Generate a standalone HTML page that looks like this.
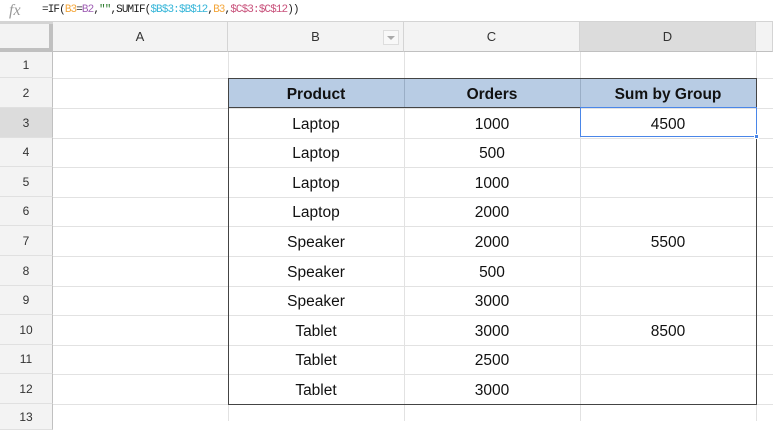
<!DOCTYPE html>
<html><head><meta charset="utf-8"><style>
*{margin:0;padding:0;box-sizing:border-box}
body{width:773px;height:421px;overflow:hidden;background:#fff;position:relative;font-family:"Liberation Sans",sans-serif}
.a{position:absolute}
.fx{left:0;top:0;width:773px;height:22px;background:#fff;border-bottom:1px solid #d4d4d4}
.rh{left:0;width:53px;background:#f3f3f3;border-right:1px solid #c0c0c0;border-bottom:1px solid #e0e0e0;color:#333;font-size:12px;display:flex;align-items:center;justify-content:center}
.ch{top:22px;height:30px;background:#f3f3f3;border-right:1px solid #d4d4d4;border-bottom:1px solid #c0c0c0;color:#333;font-size:13px;display:flex;align-items:center;justify-content:center}
.c{display:flex;align-items:center;justify-content:center;font-size:15.5px;color:#111;padding-top:3px}
.hline{height:1px;background:#e2e2e2;left:53px;width:720px}
.vline{width:1px;background:#e2e2e2;top:52px;height:369px}
</style></head><body>
<div class="a fx"></div>
<div class="a" style="left:9px;top:2px;font-family:'Liberation Serif',serif;font-style:italic;font-size:16px;color:#999">fx</div>
<div class="a" style="left:42px;top:4px;font-family:'Liberation Mono',monospace;font-size:11px;color:#222;letter-spacing:-0.9px;white-space:nowrap">=IF(<span style="color:#f4a63a">B3</span>=<span style="color:#a05fb5">B2</span>,<span style="color:#2a7a2a">""</span>,SUMIF(<span style="color:#35b5d8">$B$3:$B$12</span>,<span style="color:#f4a63a">B3</span>,<span style="color:#c8507a">$C$3:$C$12</span>))</div>
<div class="a" style="left:0;top:22px;width:773px;height:2px;background:#d4d4d4"></div>
<div class="a" style="left:0;top:24px;width:53px;height:28px;background:#f3f3f3;border-right:4px solid #c0c0c0;border-bottom:4px solid #c0c0c0"></div>
<div class="a ch" style="left:53px;width:175px">A</div>
<div class="a ch" style="left:228px;width:176px">B</div>
<div class="a" style="left:383px;top:30px;width:16px;height:15px;border:1px solid #ddd;background:#f8f8f8"></div>
<div class="a" style="left:387px;top:36px;width:0;height:0;border-left:4px solid transparent;border-right:4px solid transparent;border-top:4px solid #aaa"></div>
<div class="a ch" style="left:404px;width:176px">C</div>
<div class="a ch" style="left:580px;width:176px;background:#dcdcdc">D</div>
<div class="a ch" style="left:756px;width:17px"></div>

<div class="a vline" style="left:228px"></div>
<div class="a vline" style="left:404px"></div>
<div class="a vline" style="left:580px"></div>
<div class="a vline" style="left:756px"></div>
<div class="a hline" style="top:78px"></div>
<div class="a hline" style="top:108px"></div>
<div class="a hline" style="top:138px"></div>
<div class="a hline" style="top:167px"></div>
<div class="a hline" style="top:197px"></div>
<div class="a hline" style="top:226px"></div>
<div class="a hline" style="top:256px"></div>
<div class="a hline" style="top:286px"></div>
<div class="a hline" style="top:315px"></div>
<div class="a hline" style="top:345px"></div>
<div class="a hline" style="top:374px"></div>
<div class="a hline" style="top:404px"></div>

<div class="a rh" style="top:52px;height:26px">1</div>
<div class="a rh" style="top:78px;height:30px">2</div>
<div class="a rh" style="top:108px;height:30px;background:#dcdcdc">3</div>
<div class="a rh" style="top:138px;height:29px">4</div>
<div class="a rh" style="top:167px;height:30px">5</div>
<div class="a rh" style="top:197px;height:29px">6</div>
<div class="a rh" style="top:226px;height:30px">7</div>
<div class="a rh" style="top:256px;height:30px">8</div>
<div class="a rh" style="top:286px;height:29px">9</div>
<div class="a rh" style="top:315px;height:30px">10</div>
<div class="a rh" style="top:345px;height:29px">11</div>
<div class="a rh" style="top:374px;height:30px">12</div>
<div class="a rh" style="top:404px;height:26px;align-items:flex-start;padding-top:6px">13</div>

<div class="a" style="left:228px;top:78px;width:528px;height:30px;background:#b8cce4"></div>
<div class="a" style="left:404px;top:78px;width:1px;height:30px;background:#9aaec6"></div>
<div class="a" style="left:580px;top:78px;width:1px;height:30px;background:#9aaec6"></div>
<div class="a c" style="left:228px;top:78px;width:176px;height:30px;font-weight:bold">Product</div>
<div class="a c" style="left:404px;top:78px;width:176px;height:30px;font-weight:bold">Orders</div>
<div class="a c" style="left:580px;top:78px;width:176px;height:30px;font-weight:bold">Sum by Group</div>
<div class="a" style="left:228px;top:78px;width:529px;height:327px;border:1px solid #444"></div>
<div class="a" style="left:228px;top:107px;width:529px;height:1px;background:#444"></div>

<div class="a c" style="left:228px;top:108px;width:176px;height:30px">Laptop</div><div class="a c" style="left:404px;top:108px;width:176px;height:30px">1000</div><div class="a c" style="left:580px;top:108px;width:176px;height:30px">4500</div>
<div class="a c" style="left:228px;top:138px;width:176px;height:29px">Laptop</div><div class="a c" style="left:404px;top:138px;width:176px;height:29px">500</div>
<div class="a c" style="left:228px;top:167px;width:176px;height:30px">Laptop</div><div class="a c" style="left:404px;top:167px;width:176px;height:30px">1000</div>
<div class="a c" style="left:228px;top:197px;width:176px;height:29px">Laptop</div><div class="a c" style="left:404px;top:197px;width:176px;height:29px">2000</div>
<div class="a c" style="left:228px;top:226px;width:176px;height:30px">Speaker</div><div class="a c" style="left:404px;top:226px;width:176px;height:30px">2000</div><div class="a c" style="left:580px;top:226px;width:176px;height:30px">5500</div>
<div class="a c" style="left:228px;top:256px;width:176px;height:30px">Speaker</div><div class="a c" style="left:404px;top:256px;width:176px;height:30px">500</div>
<div class="a c" style="left:228px;top:286px;width:176px;height:29px">Speaker</div><div class="a c" style="left:404px;top:286px;width:176px;height:29px">3000</div>
<div class="a c" style="left:228px;top:315px;width:176px;height:30px">Tablet</div><div class="a c" style="left:404px;top:315px;width:176px;height:30px">3000</div><div class="a c" style="left:580px;top:315px;width:176px;height:30px">8500</div>
<div class="a c" style="left:228px;top:345px;width:176px;height:29px">Tablet</div><div class="a c" style="left:404px;top:345px;width:176px;height:29px">2500</div>
<div class="a c" style="left:228px;top:374px;width:176px;height:30px">Tablet</div><div class="a c" style="left:404px;top:374px;width:176px;height:30px">3000</div>

<div class="a" style="left:580px;top:107px;width:177px;height:30px;border:1px solid #4a86e8"></div>
<div class="a" style="left:754px;top:134px;width:5px;height:5px;background:#4a86e8;border:1px solid #fff"></div>
</body></html>
